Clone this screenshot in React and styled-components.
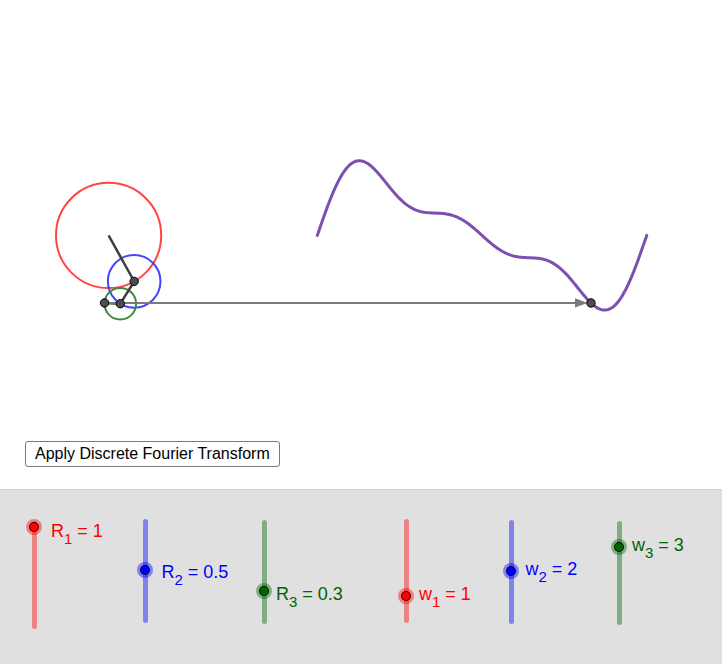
import React from "react";
import styled, { createGlobalStyle } from "styled-components";

const GlobalStyle = createGlobalStyle`
  html, body { margin: 0; padding: 0; background: #ffffff; }
  body { font-family: "Liberation Sans", Arial, sans-serif; }
  #root { width: 722px; height: 664px; overflow: hidden; }
`;

const PANEL_TOP = 490;

const Page = styled.div`
  width: 722px;
  height: 664px;
  display: flex;
  flex-direction: column;
  background: #ffffff;
`;

const Graphics = styled.div`
  position: relative;
  height: 489px;
  flex: none;
  background: #ffffff;
`;

const Canvas = styled.svg`
  display: block;
  width: 722px;
  height: 489px;
`;

const ActionButton = styled.button`
  position: absolute;
  left: 25px;
  top: 441px;
  height: 26px;
  box-sizing: border-box;
  padding: 0 9px;
  margin: 0;
  font-family: "Liberation Sans", Arial, sans-serif;
  font-size: 16px;
  line-height: 24px;
  color: #000;
  background: #ffffff;
  border: 1px solid #7a7a7a;
  border-radius: 3px;
  cursor: pointer;
`;

const SliderPanel = styled.div`
  position: relative;
  flex: 1;
  background: #e0e0e0;
  border-top: 1px solid #d2d2d2;
`;

const SliderItem = styled.div`
  position: absolute;
  width: 16px;
`;

const Track = styled.div`
  position: absolute;
  left: 5.5px;
  top: 0;
  bottom: 0;
  width: 5px;
  border-radius: 3px;
  background: ${(p) => p.$tint};
`;

const Knob = styled.div`
  position: absolute;
  left: 0;
  width: 16px;
  height: 16px;
  margin-top: -8px;
  border-radius: 50%;
  background: ${(p) => p.$tint};
  display: flex;
  align-items: center;
  justify-content: center;
`;

const KnobDot = styled.div`
  width: 10px;
  height: 10px;
  box-sizing: border-box;
  border-radius: 50%;
  background: ${(p) => p.$color};
  border: 1px solid rgba(0, 0, 0, 0.75);
`;

const Label = styled.div`
  position: absolute;
  white-space: nowrap;
  font-family: "Liberation Sans", Arial, sans-serif;
  font-size: 18px;
  line-height: 18px;
  color: ${(p) => p.$color};
`;

const Sub = styled.span`
  font-size: 15px;
  vertical-align: -7px;
`;

const COLORS = {
  red: { text: "#ff0000", tint: "rgba(255,0,0,0.42)" },
  blue: { text: "#0000ff", tint: "rgba(0,0,255,0.42)" },
  green: { text: "#006400", tint: "rgba(0,100,0,0.42)" },
};

const sliders = [
  { name: "R", sub: "1", value: "1", x: 34.3, top: 521, bottom: 629, knob: 527, labelLeft: 51, baseline: 536.7, color: "red" },
  { name: "R", sub: "2", value: "0.5", x: 145.3, top: 518.5, bottom: 622.5, knob: 570, labelLeft: 161.5, baseline: 578.3, color: "blue" },
  { name: "R", sub: "3", value: "0.3", x: 264.3, top: 519.5, bottom: 624, knob: 591, labelLeft: 276, baseline: 600, color: "green" },
  { name: "w", sub: "1", value: "1", x: 406.3, top: 518.5, bottom: 622.5, knob: 595.7, labelLeft: 419, baseline: 600, color: "red" },
  { name: "w", sub: "2", value: "2", x: 511, top: 519.5, bottom: 624, knob: 571, labelLeft: 525.5, baseline: 575, color: "blue" },
  { name: "w", sub: "3", value: "3", x: 619.3, top: 520.5, bottom: 624.5, knob: 547.3, labelLeft: 632, baseline: 551, color: "green" },
];

function Slider({ s }) {
  const c = COLORS[s.color];
  const left = s.x - 8;
  const top = s.top - PANEL_TOP;
  return (
    <SliderItem style={{ left, top, height: s.bottom - s.top }}>
      <Track $tint={c.tint} />
      <Knob $tint={c.tint} style={{ top: s.knob - s.top }}>
        <KnobDot $color={c.text} />
      </Knob>
      <Label $color={c.text} style={{ left: s.labelLeft - left, top: s.baseline - 15.2 - s.top }}>
        {s.name}
        <Sub>{s.sub}</Sub> = {s.value}
      </Label>
    </SliderItem>
  );
}

// Fourier geometry
const U = 52.6;
const CX = 108.6;
const CY = 235.4;
const T = 5.22;
const f = (t) => Math.sin(t) + 0.5 * Math.sin(2 * t) + 0.3 * Math.sin(3 * t);
const P1 = { x: CX + U * Math.cos(T), y: CY - U * Math.sin(T) };
const P2 = { x: P1.x + 0.5 * U * Math.cos(2 * T), y: P1.y - 0.5 * U * Math.sin(2 * T) };
const P3 = { x: P2.x + 0.3 * U * Math.cos(3 * T), y: P2.y - 0.3 * U * Math.sin(3 * T) };
const X0 = 317.3;
const SX = 52.43;
const curvePath = (() => {
  const n = 240;
  let d = "";
  for (let i = 0; i <= n; i++) {
    const t = (i / n) * 2 * Math.PI;
    const x = X0 + SX * t;
    const y = CY - U * f(t);
    d += (i === 0 ? "M" : "L") + x.toFixed(2) + " " + y.toFixed(2) + " ";
  }
  return d;
})();
const Q = { x: X0 + SX * T, y: P3.y };

function Point({ p }) {
  return <circle cx={p.x} cy={p.y} r="4.2" fill="#4d4d4d" stroke="#000" strokeWidth="1" />;
}

export default function App() {
  return (
    <>
      <GlobalStyle />
      <Page>
        <Graphics>
          <Canvas viewBox="0 0 722 489">
            <circle cx={CX} cy={CY} r={U} fill="none" stroke="#ff4545" strokeWidth="2" />
            <circle cx={P1.x} cy={P1.y} r={U * 0.5} fill="none" stroke="#4545ff" strokeWidth="2" />
            <circle cx={P2.x} cy={P2.y} r={U * 0.3} fill="none" stroke="#3f8a3f" strokeWidth="2" />
            <polyline
              points={`${CX},${CY} ${P1.x},${P1.y} ${P2.x},${P2.y} ${P3.x},${P3.y}`}
              fill="none"
              stroke="#404040"
              strokeWidth="2.5"
            />
            <line x1={P3.x} y1={P3.y} x2={Q.x - 14} y2={Q.y} stroke="#7a7a7a" strokeWidth="2" />
            <polygon
              points={`${Q.x - 3.5},${Q.y} ${Q.x - 16},${Q.y - 4.6} ${Q.x - 16},${Q.y + 4.6}`}
              fill="#7a7a7a"
            />
            <path d={curvePath} fill="none" stroke="#7d4fb1" strokeWidth="3" strokeLinecap="round" />
            <Point p={P1} />
            <Point p={P2} />
            <Point p={P3} />
            <Point p={Q} />
          </Canvas>
          <ActionButton type="button">Apply Discrete Fourier Transform</ActionButton>
        </Graphics>
        <SliderPanel>
          {sliders.map((s) => (
            <Slider key={s.name + s.sub} s={s} />
          ))}
        </SliderPanel>
      </Page>
    </>
  );
}
